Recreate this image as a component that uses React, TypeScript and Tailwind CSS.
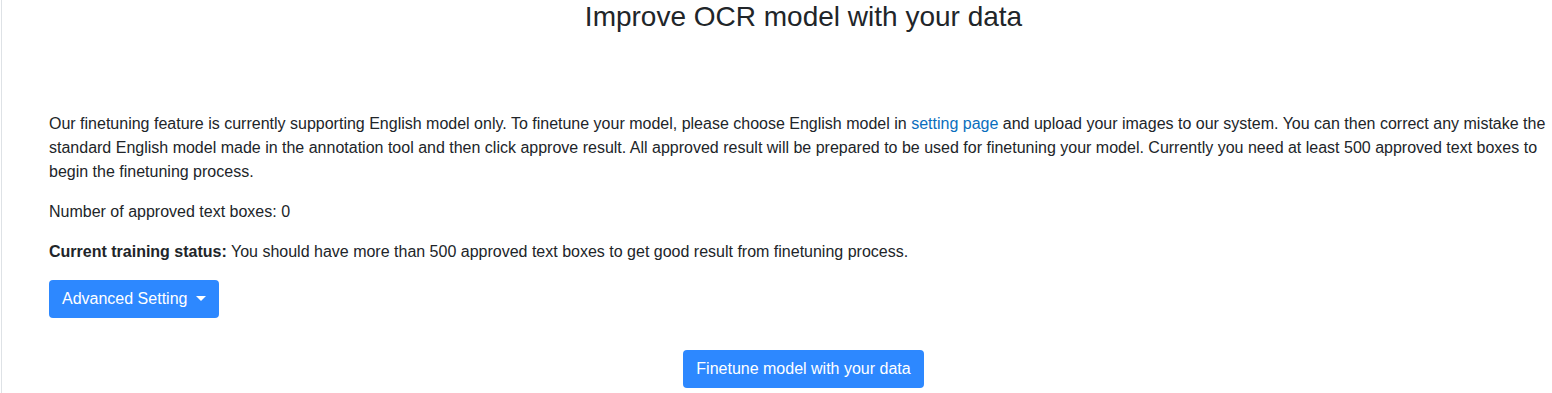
import React from "react";

export default function App() {
  return (
    <div
      className="w-[1552px] h-[393px] overflow-hidden bg-white text-[#212529] flex"
      style={{ fontFamily: '"Liberation Sans", Arial, sans-serif' }}
    >
      <div className="w-[2px] shrink-0 border-l border-[#dee2e6] ml-px" />
      <div className="shrink-0 w-[1509px] ml-[46px] flex flex-col">
        <h3 className="text-[28px] leading-[1.2] font-normal text-center m-0">
          Improve OCR model with your data
        </h3>
        <div className="mt-[78px] text-[16px] leading-6">
          <p className="mb-4 pr-[10px]">
            Our finetuning feature is currently supporting English model only. To finetune your model, please choose
            English model in{" "}
            <a href="#" className="text-[#0a6ebd]">
              setting page
            </a>{" "}
            and upload your images to our system. You can then correct any mistake the standard English model made
            in the annotation tool and then click approve result. All approved result will be prepared to be used for
            finetuning your model. Currently you need at least 500 approved text boxes to begin the finetuning
            process.
          </p>
          <p className="mb-4">Number of approved text boxes: 0</p>
          <p className="mb-4">
            <b className="font-bold">Current training status:</b> You should have more than 500 approved text boxes
            to get good result from finetuning process.
          </p>
          <div>
            <button className="inline-flex items-center h-[38px] px-[13px] rounded-[4px] bg-[#2d88ff] text-white text-[16px] leading-6">
              Advanced Setting
              <span className="ml-[9px] w-0 h-0 border-t-[5px] border-t-white border-x-[5px] border-x-transparent" />
            </button>
          </div>
          <div className="mt-8 flex justify-center">
            <button className="h-[38px] px-[13px] rounded-[4px] bg-[#2d88ff] text-white text-[16px] leading-6">
              Finetune model with your data
            </button>
          </div>
        </div>
      </div>
    </div>
  );
}
